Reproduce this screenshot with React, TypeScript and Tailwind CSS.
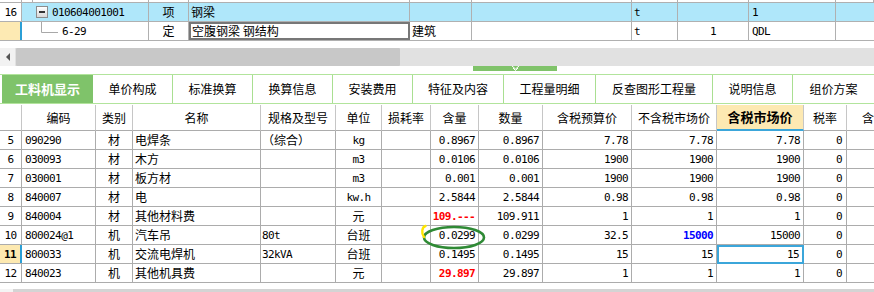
import React from "react";

const cjk = "font-['Noto_Sans_CJK_SC',sans-serif] text-[12px]";
const mono = "font-['DejaVu_Sans_Mono','Noto_Sans_CJK_SC',monospace] text-[11px] tracking-[-0.6px]";

const isCjk = (s: string) => /[\u4e00-\u9fff\uff08\uff09]/.test(s);

const topCols = [
  "w-[22px]",
  "w-[127px]",
  "w-[40px]",
  "w-[221px]",
  "w-[62px]",
  "w-[160px]",
  "w-[46px]",
  "w-[71px]",
  "w-[87px]",
  "flex-1",
];

const cols = [
  { w: "w-[22px]", a: "justify-center" },
  { w: "w-[74px]", a: "justify-start pl-[3px]" },
  { w: "w-[37px]", a: "justify-center" },
  { w: "w-[128px]", a: "justify-start pl-[2px]" },
  { w: "w-[75px]", a: "justify-start pl-[1px]" },
  { w: "w-[46px]", a: "justify-center" },
  { w: "w-[49px]", a: "justify-end pr-[3px]" },
  { w: "w-[48px]", a: "justify-end pr-[3px]" },
  { w: "w-[64px]", a: "justify-end pr-[3px]" },
  { w: "w-[89px]", a: "justify-end pr-[3px]" },
  { w: "w-[85px]", a: "justify-end pr-[3px]" },
  { w: "w-[87px]", a: "justify-end pr-[3px]" },
  { w: "w-[43px]", a: "justify-end pr-[4px]" },
  { w: "flex-1 min-w-0 overflow-hidden", a: "justify-start" },
];

const headers = [
  "",
  "编码",
  "类别",
  "名称",
  "规格及型号",
  "单位",
  "损耗率",
  "含量",
  "数量",
  "含税预算价",
  "不含税市场价",
  "含税市场价",
  "税率",
  "含税合价",
];

type Mark = "red" | "blue" | undefined;
type Row = { cells: string[]; marks?: Record<number, Mark> };

const rows: Row[] = [
  { cells: ["5", "090290", "材", "电焊条", "（综合）", "kg", "", "0.8967", "0.8967", "7.78", "7.78", "7.78", "0", ""] },
  { cells: ["6", "030093", "材", "木方", "", "m3", "", "0.0106", "0.0106", "1900", "1900", "1900", "0", ""] },
  { cells: ["7", "030001", "材", "板方材", "", "m3", "", "0.001", "0.001", "1900", "1900", "1900", "0", ""] },
  { cells: ["8", "840007", "材", "电", "", "kw.h", "", "2.5844", "2.5844", "0.98", "0.98", "0.98", "0", ""] },
  { cells: ["9", "840004", "材", "其他材料费", "", "元", "", "109.---", "109.911", "1", "1", "1", "0", ""], marks: { 7: "red" } },
  { cells: ["10", "800024@1", "机", "汽车吊", "80t", "台班", "", "0.0299", "0.0299", "32.5", "15000", "15000", "0", ""], marks: { 10: "blue" } },
  { cells: ["11", "800033", "机", "交流电焊机", "32kVA", "台班", "", "0.1495", "0.1495", "15", "15", "15", "0", ""] },
  { cells: ["12", "840023", "机", "其他机具费", "", "元", "", "29.897", "29.897", "1", "1", "1", "0", ""], marks: { 7: "red" } },
];

const tabs = [
  { t: "单价构成", w: "w-[80px]" },
  { t: "标准换算", w: "w-[80px]" },
  { t: "换算信息", w: "w-[80px]" },
  { t: "安装费用", w: "w-[80px]" },
  { t: "特征及内容", w: "w-[91px]" },
  { t: "工程量明细", w: "w-[92px]" },
  { t: "反查图形工程量", w: "w-[117px]" },
  { t: "说明信息", w: "w-[80px]" },
  { t: "组价方案", w: "flex-1" },
];

function Txt({ s, className = "" }: { s: string; className?: string }) {
  return <span className={`${isCjk(s) ? cjk : mono} ${className} whitespace-nowrap leading-none`}>{s}</span>;
}

function TopSection() {
  return (
    <div className="text-black">
      {/* tail of the row above */}
      <div className="flex h-[2px]">
        {topCols.map((w, i) => (
          <div key={i} className={`${w} border-r border-[#b0b0b0]`}>
            {i === 1 && <div className="ml-[10px] w-px h-[2px] bg-[#b0b0b0]" />}
          </div>
        ))}
      </div>
      {/* row 16 */}
      <div className="flex h-[19px] border-t border-[#b0b0b0]">
        <div className="w-[22px] border-r border-[#b0b0b0] bg-white flex items-center justify-center">
          <Txt s="16" />
        </div>
        <div className="flex-1 flex bg-[#afe7fa]">
          <div className={`${topCols[1]} border-r border-[#b0b0b0] flex items-center`}>
            <div className="ml-[14px] w-[12px] h-[12px] border border-[#8c8c8c] bg-gradient-to-b from-white to-[#d8d8d8] flex items-center justify-center">
              <div className="w-[6px] h-[2px] bg-[#333]" />
            </div>
            <Txt s="010604001001" className="ml-[4px]" />
          </div>
          <div className={`${topCols[2]} border-r border-[#b0b0b0] flex items-center justify-center`}>
            <Txt s="项" />
          </div>
          <div className={`${topCols[3]} border-r border-[#b0b0b0] flex items-center pl-[2px]`}>
            <Txt s="钢梁" />
          </div>
          <div className={`${topCols[4]} border-r border-[#b0b0b0]`} />
          <div className={`${topCols[5]} border-r border-[#b0b0b0]`} />
          <div className={`${topCols[6]} border-r border-[#b0b0b0] flex items-center pl-[2px]`}>
            <Txt s="t" />
          </div>
          <div className={`${topCols[7]} border-r border-[#b0b0b0]`} />
          <div className={`${topCols[8]} border-r border-[#b0b0b0] flex items-center pl-[3px]`}>
            <Txt s="1" />
          </div>
          <div className="flex-1" />
        </div>
      </div>
      {/* row 6-29 */}
      <div className="flex h-[20px] border-t border-b border-[#b0b0b0]">
        <div className="w-[22px] border-r-2 border-[#2b9fd6] bg-[#fdeab3]" />
        <div className="w-[127px] border-r border-[#b0b0b0] flex items-center">
          <svg width="38" height="19" className="shrink-0">
            <path d="M19.5 0 V10.5 H36" stroke="#a8a8a8" strokeWidth="1" fill="none" />
          </svg>
          <Txt s="6-29" className="ml-[2px]" />
        </div>
        <div className={`${topCols[2]} border-r border-[#b0b0b0] flex items-center justify-center`}>
          <Txt s="定" />
        </div>
        <div className={`${topCols[3]} border-2 border-[#777] flex items-center pl-[1px]`}>
          <Txt s="空腹钢梁 钢结构" />
        </div>
        <div className={`${topCols[4]} border-r border-[#b0b0b0] flex items-center pl-[2px]`}>
          <Txt s="建筑" />
        </div>
        <div className={`${topCols[5]} border-r border-[#b0b0b0]`} />
        <div className={`${topCols[6]} border-r border-[#b0b0b0] flex items-center pl-[2px]`}>
          <Txt s="t" />
        </div>
        <div className={`${topCols[7]} border-r border-[#b0b0b0] flex items-center justify-center`}>
          <Txt s="1" />
        </div>
        <div className={`${topCols[8]} border-r border-[#b0b0b0] flex items-center pl-[3px]`}>
          <Txt s="QDL" />
        </div>
        <div className="flex-1" />
      </div>
      {/* horizontal scrollbar */}
      <div className="mt-[7px] h-[18px] flex bg-[#e1e1e1]">
        <div className="w-[15px] bg-[#f2f2f2] flex items-center justify-center">
          <div className="w-0 h-0 border-y-[4px] border-y-transparent border-r-[4px] border-r-[#555]" />
        </div>
        <div className="ml-[1px] w-[384px] bg-[#c8c8c8] rounded-[1px]" />
      </div>
      {/* splitter handle */}
      <div className="h-[8px] flex">
        <div className="ml-[473px] w-[84px] h-[5px] bg-[#80c36a] flex justify-center">
          <svg width="9" height="5">
            <path d="M1 0 L4.5 3 L8 0 M2 2 L4.5 4.5 L7 2" stroke="#fff" strokeWidth="1" fill="none" />
          </svg>
        </div>
      </div>
    </div>
  );
}

function Tabs() {
  return (
    <div className="flex h-[30px] border-t border-b border-[#b2e49c]">
      <div className="ml-[2px] w-[91px] bg-[#7fc36a] flex items-center justify-center">
        <span className={`${cjk} text-[13px] font-bold text-white`}>工料机显示</span>
      </div>
      {tabs.map((t, i) => (
        <div key={i} className={`${t.w} ${i < tabs.length - 1 ? "border-r border-[#a9df91]" : ""} flex items-center justify-center`}>
          <span className={`${cjk} text-black`}>{t.t}</span>
        </div>
      ))}
    </div>
  );
}

function Table() {
  return (
    <div className="mt-[1px]">
      <div className="flex h-[26px]">
        {headers.map((h, i) => {
          const active = i === 11;
          return (
            <div
              key={i}
              className={`${cols[i].w} flex items-center ${i === 13 ? "justify-start pl-[15px]" : "justify-center"} ${
                i < 13 ? "border-r border-[#c6c6c6]" : ""
              } ${active ? "bg-[#fde9b2] border-b-2 border-b-[#3ba6da]" : "border-b border-b-[#acacac]"}`}
            >
              <span className={`${cjk} whitespace-nowrap ${active ? "font-bold text-[13px]" : ""}`}>{h}</span>
            </div>
          );
        })}
      </div>
      {rows.map((r, ri) => {
        const current = r.cells[0] === "11";
        return (
          <div key={ri} className="flex h-[19px] border-b border-[#acacac]">
            {r.cells.map((c, ci) => {
              const mark = r.marks?.[ci];
              const isNum = ci === 0;
              const selected = current && ci === 11;
              let cls = `${cols[ci].w} flex items-center ${cols[ci].a}`;
              if (ci < 13) cls += " border-r border-[#acacac]";
              if (isNum && current) cls = `${cols[ci].w} flex items-center justify-center bg-[#fde9b0] border-r-2 border-[#2b9fd6]`;
              if (selected) cls += " !border-2 !border-[#3ba6da] -mb-px";
              return (
                <div key={ci} className={cls}>
                  {c && (
                    <Txt
                      s={c}
                      className={`${mark === "red" ? "text-[#ff0000] font-bold" : mark === "blue" ? "text-[#0000ff] font-bold" : "text-black"} ${
                        isNum && current ? "font-bold" : ""
                      }`}
                    />
                  )}
                </div>
              );
            })}
          </div>
        );
      })}
      <div className="mt-[6px] h-[10px] flex bg-[#d4d4d4]">
        <div className="w-[13px] bg-[#f4f4f4]" />
      </div>
    </div>
  );
}

export default function App() {
  return (
    <div className="relative w-[874px] h-[292px] overflow-hidden bg-white">
      <TopSection />
      <Tabs />
      <Table />
      {/* hand-drawn annotation over the 含量 cell */}
      <svg className="absolute left-[418px] top-[222px]" width="74" height="32">
        <ellipse cx="36" cy="15.5" rx="30" ry="10.5" stroke="#2f8a35" strokeWidth="2.6" fill="none" />
        <path d="M7.5 4 C4 5, 3 11, 6 15" stroke="#ffe600" strokeWidth="2.4" fill="none" strokeLinecap="round" />
      </svg>
    </div>
  );
}
